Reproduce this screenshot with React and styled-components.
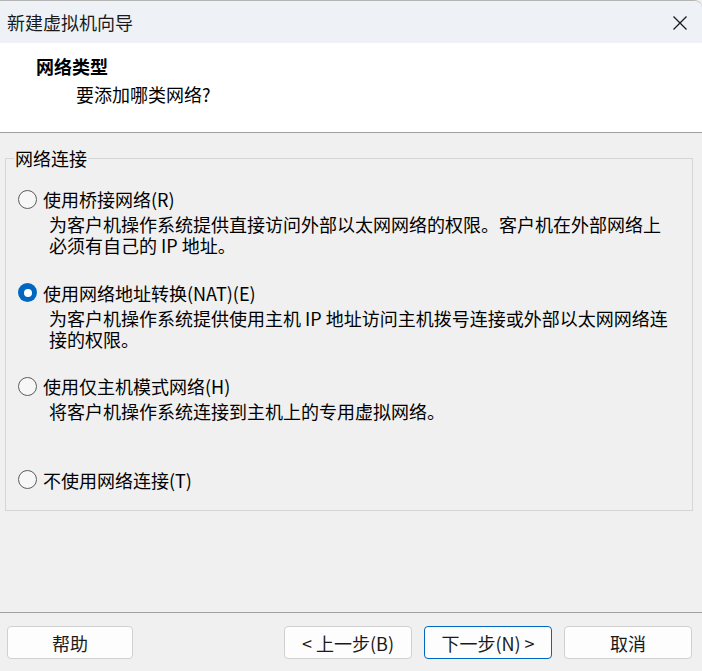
import React from "react";
import styled, { createGlobalStyle } from "styled-components";

const GlobalStyle = createGlobalStyle`
	html, body {
		margin: 0;
		padding: 0;
		background: #f0f0f0;
	}
	body {
		font-family: "Noto Sans CJK SC", "Microsoft YaHei", sans-serif;
		color: #000;
	}
	* {
		box-sizing: border-box;
	}
`;

const Window = styled.div`
	width: 702px;
	height: 671px;
	display: flex;
	flex-direction: column;
	background: #f0f0f0;
	border-top: 1px solid #b4b4b4;
	border-top-right-radius: 8px;
	overflow: hidden;
`;

const TitleBar = styled.div`
	height: 42px;
	flex-shrink: 0;
	display: flex;
	align-items: center;
	justify-content: space-between;
	padding: 0 10px 0 7px;
	background: #eef2f7;
	font-size: 18px;
	line-height: 24px;
	color: #1a1a1a;
`;

const CloseButton = styled.span`
	width: 24px;
	height: 24px;
	display: flex;
	align-items: center;
	justify-content: center;
	margin-top: 1px;
`;

const Header = styled.div`
	height: 90px;
	flex-shrink: 0;
	background: #fff;
	border-bottom: 1px solid #a0a0a0;
	padding: 11px 0 0 36px;
`;

const HeaderTitle = styled.div`
	font-size: 18px;
	line-height: 24px;
	font-weight: 700;
`;

const HeaderSubtitle = styled.div`
	font-size: 18px;
	line-height: 24px;
	margin: 4px 0 0 40px;
`;

const Main = styled.div`
	flex: 1;
	padding: 13px 9px 0 5px;
`;

const GroupBox = styled.fieldset`
	margin: 0;
	padding: 17px 0 18px 0;
	border: 1px solid #d6d6d6;
	min-inline-size: 0;
`;

const GroupTitle = styled.legend`
	margin-left: 8px;
	padding: 0 1px;
	font-size: 18px;
	line-height: 24px;
	color: #000;
`;

// Every option takes the same block height, the last one only its row.
const Option = styled.div`
	padding-left: 12px;
	height: ${ props => props.$last ? "24px" : "93.5px" };
`;

const OptionRow = styled.div`
	display: flex;
	align-items: center;
	gap: 6px;
	height: 24px;
`;

const Radio = styled.span`
	width: 19px;
	height: 19px;
	border-radius: 50%;
	flex-shrink: 0;
	display: flex;
	align-items: center;
	justify-content: center;
	border: ${ props => props.$checked ? "none" : "1px solid #5c5c5c" };
	background: ${ props => props.$checked ? "#0067c0" : "#f7f7f7" };

	&::after {
		content: "";
		display: ${ props => props.$checked ? "block" : "none" };
		width: 8px;
		height: 8px;
		border-radius: 50%;
		background: #fff;
	}
`;

const OptionLabel = styled.span`
	font-size: 18px;
	line-height: 24px;
	white-space: nowrap;
`;

const OptionDesc = styled.div`
	margin: 3px 0 0 31px;
	font-size: 18px;
	line-height: 21px;
	white-space: nowrap;
`;

const Footer = styled.div`
	height: 59px;
	flex-shrink: 0;
	display: flex;
	align-items: flex-start;
	padding: 13px 10px 0 7px;
	border-top: 1px solid #a0a0a0;
`;

const Spacer = styled.div`
	flex: 1;
`;

const Button = styled.button`
	width: ${ props => props.$wide ? "128px" : "126px" };
	height: 33px;
	margin-left: ${ props => props.$gap ? "12px" : "0" };
	display: flex;
	align-items: center;
	justify-content: center;
	background: #fdfdfd;
	border: 1px solid ${ props => props.$primary ? "#0067c0" : "#d0d0d0" };
	border-radius: 4px;
	font-family: "Noto Sans CJK SC", "Microsoft YaHei", sans-serif;
	font-size: 18px;
	line-height: 24px;
	color: #1a1a1a;
	padding: 0;
	white-space: nowrap;
`;

const options = [
	{
		label: "使用桥接网络(R)",
		desc: [ "为客户机操作系统提供直接访问外部以太网网络的权限。客户机在外部网络上", "必须有自己的 IP 地址。" ],
	},
	{
		label: "使用网络地址转换(NAT)(E)",
		desc: [ "为客户机操作系统提供使用主机 IP 地址访问主机拨号连接或外部以太网网络连", "接的权限。" ],
		checked: true,
	},
	{
		label: "使用仅主机模式网络(H)",
		desc: [ "将客户机操作系统连接到主机上的专用虚拟网络。" ],
	},
	{
		label: "不使用网络连接(T)",
		desc: [],
		last: true,
	},
];

function CloseIcon() {
	return (
		<svg width="16" height="16" viewBox="0 0 16 16">
			<path d="M1.5 1.5 L14.5 14.5 M14.5 1.5 L1.5 14.5" stroke="#1a1a1a" strokeWidth="1.3" fill="none" />
		</svg>
	);
}

function RadioOption( { label, desc, checked, last } ) {
	return (
		<Option $last={ last }>
			<OptionRow>
				<Radio $checked={ checked } />
				<OptionLabel>{ label }</OptionLabel>
			</OptionRow>
			{ desc.length > 0 && (
				<OptionDesc>
					{ desc.map( ( line, i ) => <div key={ i }>{ line }</div> ) }
				</OptionDesc>
			) }
		</Option>
	);
}

export default function App() {
	return (
		<>
			<GlobalStyle />
			<Window>
				<TitleBar>
					<span>新建虚拟机向导</span>
					<CloseButton><CloseIcon /></CloseButton>
				</TitleBar>
				<Header>
					<HeaderTitle>网络类型</HeaderTitle>
					<HeaderSubtitle>要添加哪类网络?</HeaderSubtitle>
				</Header>
				<Main>
					<GroupBox>
						<GroupTitle>网络连接</GroupTitle>
						{ options.map( opt => <RadioOption key={ opt.label } { ...opt } /> ) }
					</GroupBox>
				</Main>
				<Footer>
					<Button>帮助</Button>
					<Spacer />
					<Button $wide>&lt; 上一步(B)</Button>
					<Button $wide $gap $primary>下一步(N) &gt;</Button>
					<Button $wide $gap>取消</Button>
				</Footer>
			</Window>
		</>
	);
}
